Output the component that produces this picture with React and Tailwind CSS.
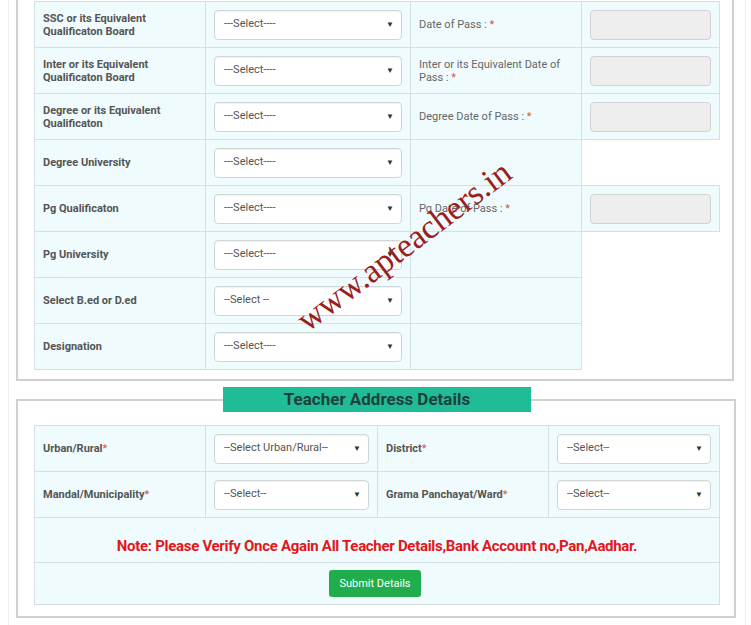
import React from "react";

const cell = "border border-[#d6dfe2] bg-[#effbfd] px-2 align-middle";
const labelBold = "text-[11px] font-bold leading-[13px] text-[#555]";
const labelPlain = "text-[11px] leading-[13px] text-[#666]";

const Star = ({ bold }) => (
  <span className={`text-[#d9534f] ${bold ? "font-normal" : ""}`}>*</span>
);

const SelectBox = ({ text, w = "w-full" }) => (
  <div
    className={`${w} h-[30px] flex flex-row items-center justify-between rounded-[4px] border border-[#cfd6d8] bg-white pl-[9px] pr-[7px] shadow-[inset_0_1px_1px_rgba(0,0,0,0.06)]`}
  >
    <span className="text-[11px] text-[#555]">{text}</span>
    <span className="text-[8px] text-[#333]">▼</span>
  </div>
);

const DateBox = () => (
  <div className="w-full h-[30px] rounded-[4px] border border-[#d2d2d2] bg-[#eeeeee]" />
);

const App = () => {
  const top = [
    {
      label: "SSC or its Equivalent Qualificaton Board",
      select: "---Select----",
      right: "Date of Pass :",
    },
    {
      label: "Inter or its Equivalent Qualificaton Board",
      select: "---Select----",
      right: "Inter or its Equivalent Date of Pass :",
    },
    {
      label: "Degree or its Equivalent Qualificaton",
      select: "---Select----",
      right: "Degree Date of Pass :",
    },
    { label: "Degree University", select: "---Select----", empty: true },
    {
      label: "Pg Qualificaton",
      select: "---Select----",
      right: "Pg Date of Pass :",
    },
    { label: "Pg University", select: "---Select----", empty: true },
    { label: "Select B.ed or D.ed", select: "--Select --", empty: true },
    { label: "Designation", select: "---Select----", empty: true },
  ];

  return (
    <div
      className="relative w-full h-[625px] overflow-hidden bg-white"
      style={{ fontFamily: "Roboto, 'Liberation Sans', sans-serif" }}
    >
      <div className="ml-[8px] w-[738px] h-[625px] border-x border-[#eeeeee]">
        {/* qualification block, top cut off */}
        <div className="ml-[7px] w-[718px] border-x-2 border-b-2 border-[#d0d0d0] pt-[1px] pb-[9px] pl-[16px]">
          <table className="table-fixed border-collapse w-[685px]">
            <colgroup>
              <col className="w-[171px]" />
              <col className="w-[205px]" />
              <col className="w-[171px]" />
              <col className="w-[138px]" />
            </colgroup>
            <tbody>
              {top.map((r, i) => (
                <tr key={i} className="h-[46px]">
                  <td className={cell}>
                    <div className={labelBold}>{r.label}</div>
                  </td>
                  <td className={cell}>
                    <SelectBox text={r.select} />
                  </td>
                  <td className={cell}>
                    {r.right ? (
                      <div className={labelPlain}>
                        {r.right} <Star />
                      </div>
                    ) : null}
                  </td>
                  {r.empty ? null : (
                    <td className={cell}>
                      <DateBox />
                    </td>
                  )}
                </tr>
              ))}
            </tbody>
          </table>
        </div>

        {/* address block */}
        <fieldset className="ml-[7px] mt-[6px] w-[718px] border-2 border-[#d0d0d0] pt-[13px] pb-[11px] pl-[16px] pr-[14px]">
          <legend className="mx-auto w-[308px] h-[25px] bg-[#1fbc97] text-center text-[17px] font-bold leading-[25px] text-[#22403a]">
            Teacher Address Details
          </legend>
          <table className="table-fixed border-collapse w-[685px]">
            <colgroup>
              <col className="w-[171px]" />
              <col className="w-[172px]" />
              <col className="w-[171px]" />
              <col className="w-[171px]" />
            </colgroup>
            <tbody>
              <tr className="h-[46px]">
                <td className={cell}>
                  <div className={labelBold}>
                    Urban/Rural<Star bold />
                  </div>
                </td>
                <td className={cell}>
                  <SelectBox text="--Select Urban/Rural--" />
                </td>
                <td className={cell}>
                  <div className={labelBold}>
                    District<Star bold />
                  </div>
                </td>
                <td className={cell}>
                  <SelectBox text="--Select--" />
                </td>
              </tr>
              <tr className="h-[46px]">
                <td className={cell}>
                  <div className={labelBold}>
                    Mandal/Municipality<Star bold />
                  </div>
                </td>
                <td className={cell}>
                  <SelectBox text="--Select--" />
                </td>
                <td className={cell}>
                  <div className={labelBold}>
                    Grama Panchayat/Ward<Star bold />
                  </div>
                </td>
                <td className={cell}>
                  <SelectBox text="--Select--" />
                </td>
              </tr>
              <tr className="h-[45px]">
                <td colSpan={4} className={`${cell} pt-[11px] text-center`}>
                  <span className="inline-block text-[15px] font-bold text-[#e3161b] tracking-[-0.3px]">
                    Note: Please Verify Once Again All Teacher Details,Bank
                    Account no,Pan,Aadhar.
                  </span>
                </td>
              </tr>
              <tr className="h-[42px]">
                <td colSpan={4} className={`${cell} pr-[12px] text-center`}>
                  <button className="w-[92px] h-[27px] rounded-[3px] bg-[#21ad4b] text-[11px] text-white">
                    Submit Details
                  </button>
                </td>
              </tr>
            </tbody>
          </table>
        </fieldset>
      </div>

      {/* site watermark */}
      <div
        className="absolute left-[404px] top-[246px] -translate-x-1/2 -translate-y-1/2 -rotate-[37deg] whitespace-nowrap text-[34px] leading-none text-[#9c1d1d]"
        style={{ fontFamily: "'Liberation Serif', serif" }}
      >
        www.apteachers.in
      </div>
    </div>
  );
};

export default App;
